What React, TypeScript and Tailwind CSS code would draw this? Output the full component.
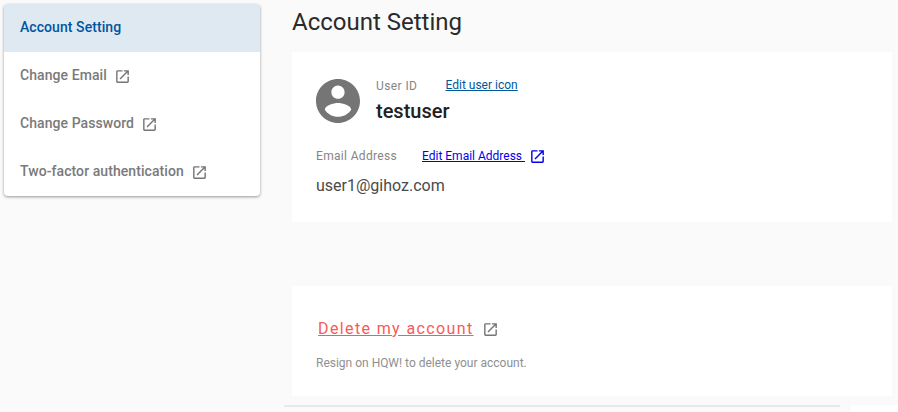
const OPEN_IN_NEW =
  "M19 19H5V5h7V3H5c-1.11 0-2 .9-2 2v14c0 1.1.89 2 2 2h14c1.1 0 2-.9 2-2v-7h-2v7zM14 3v2h3.59l-9.83 9.83 1.41 1.41L19 6.41V10h2V3h-7z";
const ACCOUNT_CIRCLE =
  "M12 2C6.48 2 2 6.48 2 12s4.48 10 10 10 10-4.48 10-10S17.52 2 12 2zm0 3c1.66 0 3 1.34 3 3s-1.34 3-3 3-3-1.34-3-3 1.34-3 3-3zm0 14.2c-2.5 0-4.71-1.28-6-3.22.03-1.99 4-3.08 6-3.08 1.99 0 5.97 1.09 6 3.08-1.29 1.94-3.5 3.22-6 3.22z";

function OpenIcon({ className }: { className: string }) {
  return (
    <svg viewBox="0 0 24 24" className={className} fill="currentColor">
      <path d={OPEN_IN_NEW} />
    </svg>
  );
}

function MenuItem({ label }: { label: string }) {
  return (
    <div className="flex h-12 items-center pl-4 text-[14px] font-medium tracking-[0.07px] text-[#7a7a7a]">
      <span className="-translate-y-px">{label}</span>
      <OpenIcon className="ml-[7px] h-[17px] w-[17px] text-[#757575]" />
    </div>
  );
}

export default function App() {
  return (
    <div className="flex h-[412px] w-[898px] overflow-hidden bg-[#fafafa] font-['Roboto',sans-serif]">
      {/* Sidebar */}
      <div className="w-[292px] shrink-0 pl-1 pt-1">
        <div className="w-[256px] overflow-hidden rounded bg-white shadow-[0_1px_3px_rgba(0,0,0,0.4)]">
          <div className="flex h-12 items-center bg-[#dfe9f2] pl-4 text-[14px] font-medium tracking-[0.07px] text-[#01559f]">
            <span className="-translate-y-px">Account Setting</span>
          </div>
          <MenuItem label="Change Email" />
          <MenuItem label="Change Password" />
          <MenuItem label="Two-factor authentication" />
        </div>
      </div>

      {/* Main */}
      <div className="flex w-[600px] flex-col">
        <h1 className="h-[52px] shrink-0 pt-[6px] text-[24px] leading-8 font-normal text-[#2a2a2a]">
          Account Setting
        </h1>

        <div className="h-[170px] shrink-0 bg-white pl-6 pt-[27px]">
          <div className="flex items-start">
            <svg viewBox="2 2 20 20" className="h-11 w-11 text-[#757575]" fill="currentColor">
              <path d={ACCOUNT_CIRCLE} />
            </svg>
            <div className="ml-4">
              <div className="flex h-[14px] items-center text-[12px]">
                <span className="w-[69.5px] tracking-[0.4px] text-[#858585]">User ID</span>
                <a className="-translate-y-px text-[#01579b] underline">Edit user icon</a>
              </div>
              <div className="mt-[2px] text-[20px] leading-8 font-medium text-[#212121]">testuser</div>
            </div>
          </div>
          <div className="mt-5 flex h-[18px] items-center text-[12px]">
            <span className="w-[106px] tracking-[0.33px] text-[#858585]">Email Address</span>
            <a className="whitespace-pre text-[#0000ee] underline">Edit Email Address </a>
            <OpenIcon className="ml-[4px] h-[17px] w-[17px] text-[#0000ee]" />
          </div>
          <div className="mt-[11px] text-[16px] leading-5 text-[#4a4a4a]">user1@gihoz.com</div>
        </div>

        <div className="mt-16 h-[110px] shrink-0 bg-white pl-6">
          <div className="flex h-[32px] items-center pt-[43px] pl-[2px]">
            <a className="text-[16px] tracking-[1.38px] text-[#f75a5a] underline">Delete my account</a>
            <OpenIcon className="ml-[8px] h-[17px] w-[17px] text-[#757575]" />
          </div>
          <div className="mt-[26px] text-[12px] leading-4 text-[#8f8f8f]">
            Resign on HQW! to delete your account.
          </div>
        </div>

        {/* cut-off edge of the next block */}
        <div className="mt-[9px] ml-[-8px] flex shrink-0">
          <div className="h-[2px] w-[556px] shrink-0 bg-[#e9e9e9]" />
          <div className="ml-[11px] h-3 w-[47px] shrink-0 bg-white" />
        </div>
      </div>
    </div>
  );
}
